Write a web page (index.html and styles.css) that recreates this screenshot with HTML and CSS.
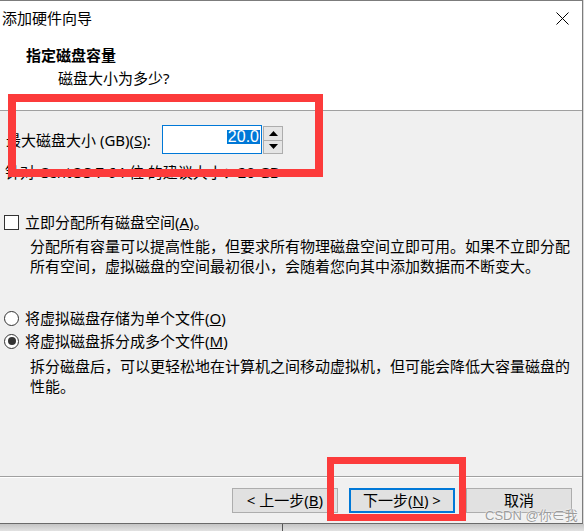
FILE: index.html
```html
<!DOCTYPE html>
<html lang="zh-CN">
<head>
<meta charset="utf-8">
<title>添加硬件向导</title>
<link rel="stylesheet" href="styles.css">
</head>
<body>
<div class="window">
  <div class="top">
    <div class="titlebar">
      <span class="title">添加硬件向导</span>
      <svg class="close" width="13" height="13" viewBox="0 0 13 13"><path d="M0.5 0.5 L12.5 12.5 M12.5 0.5 L0.5 12.5" stroke="#000" stroke-width="1" fill="none"/></svg>
    </div>
    <div class="header">
      <div class="h-title">指定磁盘容量</div>
      <div class="h-sub">磁盘大小为多少?</div>
    </div>
  </div>
  <div class="content">
    <div class="size-row">
      <span class="size-label">最大磁盘大小 (GB)(<u>S</u>):</span>
      <div class="spin-input"><span class="sel">20.0</span></div>
      <div class="spin-btns">
        <div class="sb"><svg width="9" height="5" viewBox="0 0 9 5"><polygon points="0,5 9,5 4.5,0" fill="#000"/></svg></div>
        <div class="sb"><svg width="9" height="5" viewBox="0 0 9 5"><polygon points="0,0 9,0 4.5,5" fill="#000"/></svg></div>
      </div>
    </div>
    <div class="hint">针对 CentOS 7 64 位 的建议大小：20 GB</div>
    <div class="opt-row check-row"><span class="checkbox"></span><span>立即分配所有磁盘空间(<u>A</u>)。</span></div>
    <p class="desc desc1">分配所有容量可以提高性能，但要求所有物理磁盘空间立即可用。如果不立即分配<br>所有空间，虚拟磁盘的空间最初很小，会随着您向其中添加数据而不断变大。</p>
    <div class="opt-row radio-row1"><span class="radio"></span><span>将虚拟磁盘存储为单个文件(<u>O</u>)</span></div>
    <div class="opt-row radio-row2"><span class="radio checked"></span><span>将虚拟磁盘拆分成多个文件(<u>M</u>)</span></div>
    <p class="desc desc2">拆分磁盘后，可以更轻松地在计算机之间移动虚拟机，但可能会降低大容量磁盘的<br>性能。</p>
  </div>
  <div class="footer">
    <button class="btn">&lt; 上一步(<u>B</u>)</button>
    <button class="btn default">下一步(<u>N</u>) &gt;</button>
    <button class="btn">取消</button>
  </div>
</div>
<div class="below"><span class="below-line"></span></div>
<div class="mark mark-size"></div>
<div class="mark mark-next"></div>
<div class="watermark">CSDN @你∈我</div>
</body>
</html>
```

FILE: styles.css
```css
* { box-sizing: border-box; }
html, body { margin: 0; padding: 0; }
body {
  width: 584px;
  height: 531px;
  background: #d9d9d9;
  font-family: "Noto Sans", "Noto Sans CJK SC", sans-serif;
  font-size: 15px;
  color: #000;
  position: relative;
  overflow: hidden;
}
.window {
  width: 583px;
  height: 524px;
  border-top: 1px solid #7c7c7c;
  border-right: 1px solid #7c7c7c;
  border-bottom: 1px solid #6a6a6a;
  background: #f0f0f0;
  display: flex;
  flex-direction: column;
}
.top {
  height: 110px;
  background: #fff;
  border-bottom: 1px solid #a0a0a0;
}
.titlebar {
  height: 36px;
  padding: 7px 13px 0 2px;
  display: flex;
  justify-content: space-between;
  align-items: flex-start;
}
.title { line-height: 20px; }
.close { margin-top: 4px; display: block; }
.header { padding: 8px 0 0 26px; }
.h-title { font-weight: bold; line-height: 20px; }
.h-sub { margin-top: 3px; padding-left: 32px; line-height: 20px; }

.content { flex: 1; }
.size-row {
  margin-top: 14px;
  padding-left: 6px;
  display: flex;
  align-items: center;
  height: 29px;
}
.size-label { width: 156px; line-height: 20px; }
.spin-input {
  width: 100px;
  height: 29px;
  border: 1px solid #0078d7;
  background: #fff;
  display: flex;
  justify-content: flex-end;
  align-items: center;
  padding-right: 1px;
}
.sel {
  background: #0078d7;
  color: #fff;
  font-family: "Liberation Sans", "Noto Sans", sans-serif;
  font-size: 16px;
  line-height: 14px;
  height: 14px;
  padding: 0 1px;
  margin-top: -6px;
}
.spin-btns {
  margin-left: 1px;
  width: 20px;
  height: 28px;
  align-self: flex-end;
  display: flex;
  flex-direction: column;
  border: 1px solid #adadad;
  background: #adadad;
  gap: 1px;
}
.sb {
  flex: 1;
  background: #e5e5e5;
  display: flex;
  align-items: center;
  justify-content: center;
}
.sb svg { display: block; }
.hint { margin-top: 8px; padding-left: 5px; line-height: 20px; }

.opt-row {
  display: flex;
  align-items: center;
  padding-left: 4px;
  line-height: 20px;
  height: 20px;
}
.check-row { margin-top: 30px; }
.radio-row1 { margin-top: 32px; }
.radio-row2 { margin-top: 3px; }
.checkbox {
  width: 15px;
  height: 15px;
  border: 1px solid #333;
  background: #fff;
  margin-right: 6px;
}
.radio {
  width: 15px;
  height: 15px;
  border: 1px solid #333;
  border-radius: 50%;
  background: #fff;
  margin-right: 6px;
  display: flex;
  align-items: center;
  justify-content: center;
}
.radio.checked::after {
  content: "";
  width: 8px;
  height: 8px;
  border-radius: 50%;
  background: #333;
}
.desc { margin: 0; padding-left: 30px; line-height: 20px; }
.desc1 { margin-top: 4px; }
.desc2 { margin-top: 5px; }

.footer {
  height: 47px;
  border-top: 1px solid #a0a0a0;
  box-shadow: inset 0 1px 0 #fff;
  padding: 11px 10px 0 0;
  display: flex;
  justify-content: flex-end;
  gap: 11px;
}
.btn {
  width: 106px;
  height: 25px;
  border: 1px solid #adadad;
  background: #e1e1e1;
  font-family: inherit;
  font-size: 15px;
  color: #000;
  padding: 0;
  line-height: 21px;
}
.btn.default { border: 2px solid #0078d7; }

.below {
  height: 7px;
  background: linear-gradient(#c4c4c4, #e2e2e2);
  display: flex;
}
.below-line { width: 1px; margin-left: 282px; background: #555; }

.mark {
  position: absolute;
  border: 8px solid #fc3b3b;
}
.mark-size { left: 8px; top: 94px; width: 315px; height: 83px; }
.mark-next { left: 327px; top: 457px; width: 139px; height: 64px; border-width: 7px; }
.watermark {
  position: absolute;
  left: 485px;
  top: 507px;
  white-space: nowrap;
  font-family: "Liberation Sans", "Noto Sans CJK SC", sans-serif;
  font-size: 13px;
  line-height: 17px;
  color: #9c9c9c;
  text-shadow: 0 0 2px #fff, 0 0 1px #fff;
}
```
